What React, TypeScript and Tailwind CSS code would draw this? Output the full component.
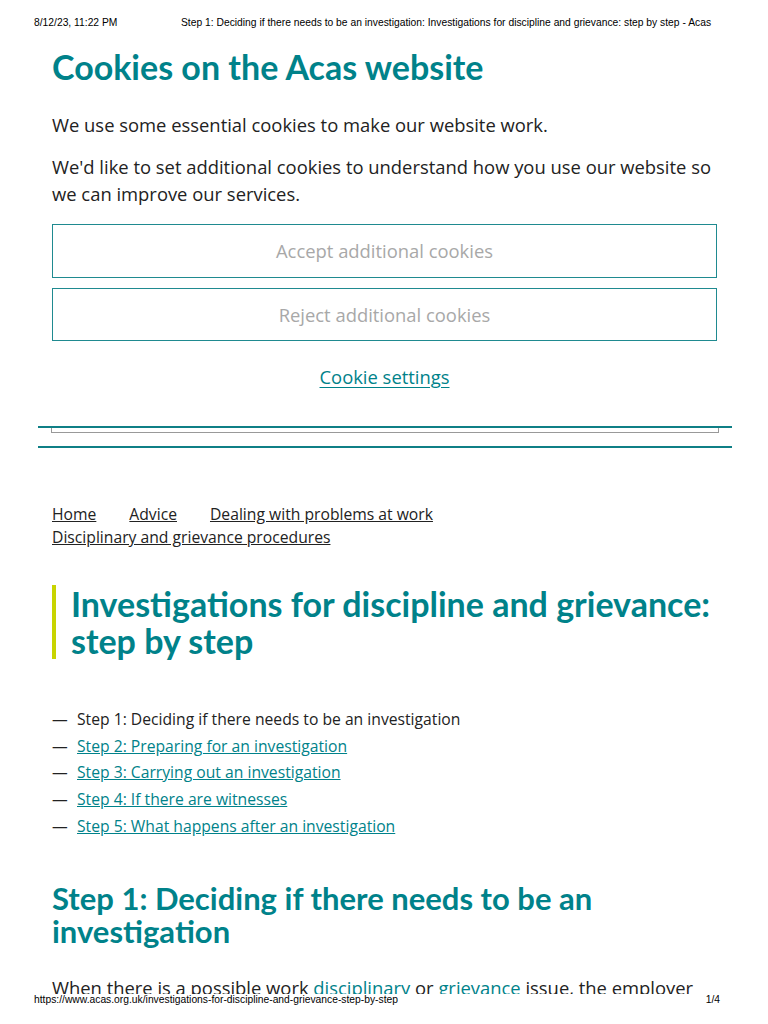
import React from "react";

const teal = "text-[#00828a]";

export default function App() {
  const body = { fontFamily: '"Open Sans", "Noto Sans", sans-serif' };
  const head = { fontFamily: 'Lato, "DejaVu Sans", sans-serif' };
  const arial = { fontFamily: '"Liberation Sans", Arial, sans-serif' };
  const steps = [
    "Step 2: Preparing for an investigation",
    "Step 3: Carrying out an investigation",
    "Step 4: If there are witnesses",
    "Step 5: What happens after an investigation",
  ];
  return (
    <div className="w-[768px] h-[1024px] bg-white flex flex-col overflow-hidden" style={body}>
      <div className="h-[44px] shrink-0 flex items-center text-[10.3px] text-black pl-[34px] pt-[2px]" style={arial}>
        <span className="w-[147px]">8/12/23, 11:22 PM</span>
        <span>Step 1: Deciding if there needs to be an investigation: Investigations for discipline and grievance: step by step - Acas</span>
      </div>
      <div className="flex-1 overflow-hidden">
        <div className="px-[52px] pr-[51px]">
          <h2 className={`mt-[3px] text-[34px] font-bold leading-[40px] ${teal}`} style={head}>
            Cookies on the Acas website
          </h2>
          <p className="mt-[24px] text-[18.4px] leading-[27px] text-[#222]">
            We use some essential cookies to make our website work.
          </p>
          <p className="mt-[15px] text-[18.4px] leading-[27px] text-[#222]">
            We'd like to set additional cookies to understand how you use our website so we can improve our services.
          </p>
          <div className="mt-[17px] h-[54px] border border-[#1f8a90] flex items-center justify-center text-[18.4px] text-[#a8a8a8]">
            Accept additional cookies
          </div>
          <div className="mt-[10px] h-[53px] border border-[#1f8a90] flex items-center justify-center text-[18.4px] text-[#a8a8a8]">
            Reject additional cookies
          </div>
          <div className="mt-[22px] flex justify-center">
            <span className={`text-[18.4px] leading-[27px] underline underline-offset-[3px] ${teal}`}>Cookie settings</span>
          </div>
        </div>
        <div className="mt-[36px] mx-[38px] mr-[36px] border-t-2 border-[#0f7f86]">
          <div className="mx-[13px] h-[5px] border-x border-b border-[#999]" />
          <div className="mt-[13px] border-t-2 border-[#0f7f86]" />
        </div>
        <div className="px-[52px] mt-[55px]">
          <div className="flex flex-wrap gap-x-[33px] text-[15.7px] leading-[23px] text-[#222]">
            <span className="underline">Home</span>
            <span className="underline">Advice</span>
            <span className="underline">Dealing with problems at work</span>
            <span className="underline">Disciplinary and grievance procedures</span>
          </div>
          <div className="mt-[36px] border-l-[4px] border-[#c8d400] pl-[15px]">
            <h1 className={`text-[34px] font-bold leading-[37px] ${teal}`} style={head}>
              Investigations for discipline and grievance: step by step
            </h1>
          </div>
          <ul className="mt-[47px] text-[15.7px] leading-[26.7px]">
            <li className="flex text-[#222]">
              <span className="w-[25px]">—</span>
              <span>Step 1: Deciding if there needs to be an investigation</span>
            </li>
            {steps.map((s) => (
              <li key={s} className="flex">
                <span className="w-[25px] text-[#222]">—</span>
                <span className={`underline ${teal}`}>{s}</span>
              </li>
            ))}
          </ul>
          <h2 className={`mt-[42px] text-[31px] font-bold leading-[33px] ${teal}`} style={head}>
            Step 1: Deciding if there needs to be an investigation
          </h2>
          <p className="mt-[26px] text-[18.4px] leading-[27px] text-[#222]">
            When there is a possible work <span className={teal}>disciplinary</span> or <span className={teal}>grievance</span> issue, the employer should decide whether an investigation is needed.
          </p>
        </div>
      </div>
      <div className="h-[30px] shrink-0 flex justify-between text-[10.3px] leading-[12px] pl-[34px] pr-[48px]" style={arial}>
        <span>https://www.acas.org.uk/investigations-for-discipline-and-grievance-step-by-step</span>
        <span>1/4</span>
      </div>
    </div>
  );
}
